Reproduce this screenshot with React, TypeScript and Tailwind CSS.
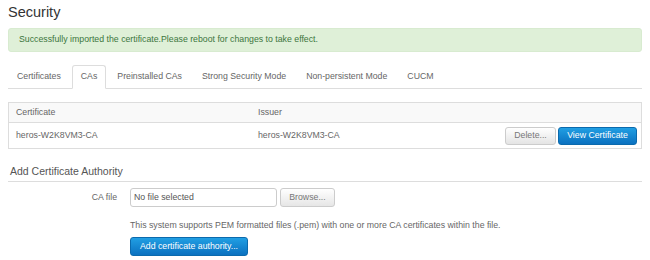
import { useState } from "react";

const tabs = [
    "Certificates",
    "CAs",
    "Preinstalled CAs",
    "Strong Security Mode",
    "Non-persistent Mode",
    "CUCM",
];

const App = () => {
    const [active, setActive] = useState("CAs");

    return (
        <div className="min-h-[260px] w-[650px] bg-white px-2 pt-[2px] font-['Liberation_Sans',Arial,sans-serif] text-[8.75px] text-[#666]">
            <h1 className="text-[14.5px] leading-[20px] text-[#333]">Security</h1>

            {/* Alert */}
            <div className="mt-[6px] flex h-[24px] items-center rounded-[3px] border border-[#d8ebd0] bg-[#dff0d8] px-[10px] text-[#3c763d]">
                Successfully imported the certificate.Please reboot for changes to take effect.
            </div>

            {/* Tabs */}
            <div className="mt-[13px] flex border-b border-[#ddd]">
                {tabs.map((t) => (
                    <button
                        key={t}
                        onClick={() => setActive(t)}
                        className={`-mb-px mr-[2px] h-[24px] rounded-t-[3px] border px-[8px] ${
                            active === t
                                ? "border-[#ddd] border-b-white bg-white"
                                : "border-transparent"
                        }`}
                    >
                        {t}
                    </button>
                ))}
            </div>

            {/* Table */}
            <div className="mt-[13px] border border-[#ddd]">
                <div className="flex h-[20px] items-center border-b border-[#ddd] bg-[#f9f9f9] px-[7px]">
                    <div className="w-[242px]">Certificate</div>
                    <div>Issuer</div>
                </div>
                <div className="flex h-[25px] items-center pl-[7px] pr-[4px]">
                    <div className="w-[242px]">heros-W2K8VM3-CA</div>
                    <div className="flex-1">heros-W2K8VM3-CA</div>
                    <button className="h-[18px] w-[51px] rounded-[3px] border border-[#ccc] bg-linear-to-b from-white to-[#e4e4e4] text-[#777]">
                        Delete...
                    </button>
                    <button className="ml-[2px] h-[18px] w-[79px] rounded-[3px] border border-[#0b6aad] bg-linear-to-b from-[#219fe3] to-[#0b71c0] text-white">
                        View Certificate
                    </button>
                </div>
            </div>

            {/* Add CA */}
            <h2 className="mt-[14px] pl-[2px] text-[10.5px] leading-[16px] text-[#555]">Add Certificate Authority</h2>
            <div className="mt-[2px] border-t border-[#ddd]" />

            <div className="mt-[6px] flex items-center">
                <div className="w-[109px] text-right">CA file</div>
                <div className="ml-[13px] flex h-[19px] w-[147px] items-center rounded-[3px] border border-[#ccc] px-[3px] text-[#555]">
                    No file selected
                </div>
                <button className="ml-[3px] h-[19px] w-[55px] rounded-[3px] border border-[#ccc] bg-linear-to-b from-white to-[#e6e6e6] text-[#777]">
                    Browse...
                </button>
            </div>

            <div className="ml-[122px] mt-[12px] leading-[12px]">
                This system supports PEM formatted files (.pem) with one or more CA certificates within the file.
            </div>
            <button className="ml-[122px] mt-[6px] h-[19px] w-[118px] rounded-[3px] border border-[#0b6aad] bg-linear-to-b from-[#219fe3] to-[#0b71c0] text-white">
                Add certificate authority...
            </button>
        </div>
    );
};

export default App;
